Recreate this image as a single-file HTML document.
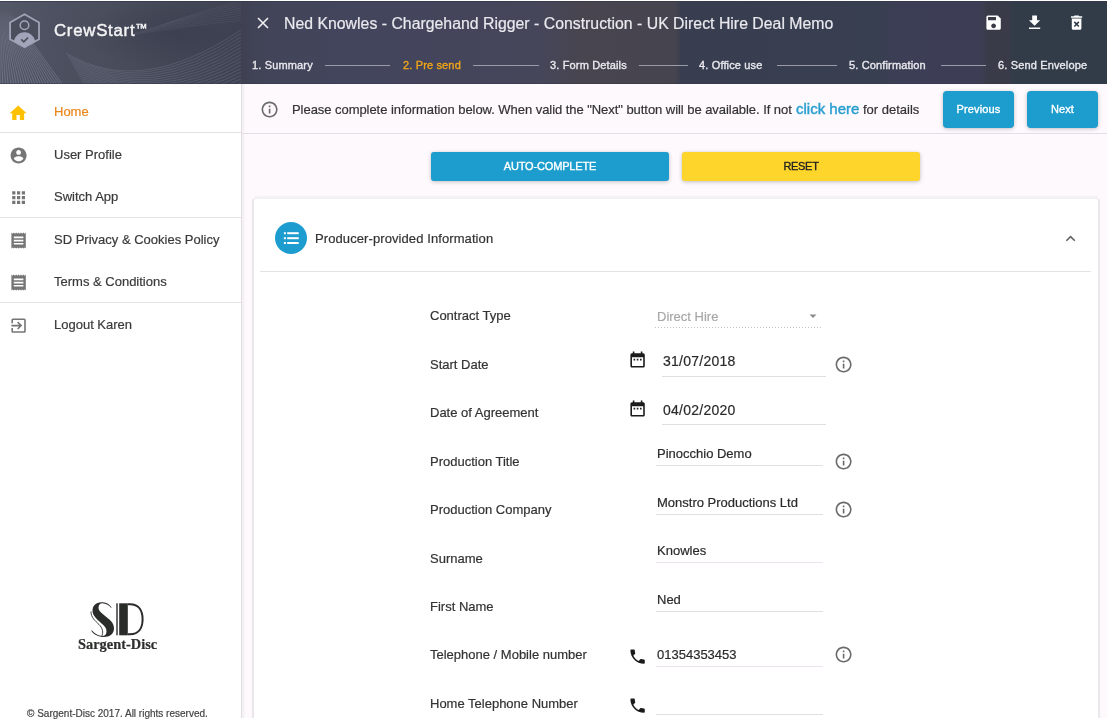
<!DOCTYPE html>
<html><head><meta charset="utf-8">
<style>
*{box-sizing:border-box;margin:0;padding:0}
html,body{width:1107px;height:727px;overflow:hidden;background:#fff;font-family:"Liberation Sans",sans-serif}
.a{position:absolute}
.t{position:absolute;white-space:nowrap;line-height:1;will-change:transform;-webkit-text-stroke:0.2px currentColor}
#main{left:241px;top:84px;width:866px;height:634px;background:#fdf9fd}
#hdr{left:241px;top:1px;width:866px;height:83px;background:linear-gradient(90deg,#3f4153 0px,#424459 31px,#43455d 120px,#44455b 227px,#46465a 300px,#48454f 340px,#46444f 434px,#383e4f 440px,#383f50 640px,#3c3e55 653px,#3d3e55 740px,#3a3b48 746px,#3a3b48 767px,#323c48 771px,#323c48 866px)}
#shdr{left:0;top:1px;width:241px;height:83px;background:linear-gradient(100deg,#555867 0%,#4d5060 25%,#4a4d5b 45%,#444756 70%,#3f4252 100%)}
#side{left:0;top:84px;width:241px;height:643px;background:#fff}
#sideb{left:241px;top:84px;width:5px;height:634px;background:linear-gradient(90deg,#e0dce2 0px,#e0dce2 1px,#f3f1f3 1px,#f4f2f4 3px,#fdf9fd 4px)}
.sl{left:0;width:241px;height:1px;background:#e4e1e5}
.st{left:54px;font-size:13px;color:#3a3a3a}
.si{left:8.5px;width:19.2px;height:19.2px}
.step{font-size:11px;color:#e9e9ee;top:60px;letter-spacing:0.15px;-webkit-text-stroke:0.35px currentColor}
.sline{top:65px;height:1px;background:#9a9ba6}
.lab{left:430px;font-size:13px;color:#333}
.val{font-size:13px;color:#2b2b2b}
.ul{height:1px;background:#e0dfe3}
.ic{width:19.2px;height:19.2px}
.btn{background:#1c9dcd;border-radius:3px;box-shadow:0 1px 4px rgba(0,0,0,.22),0 0 1px rgba(0,0,0,.12)}
</style></head><body>

<div class="a" id="shdr"></div>
<svg class="a" style="left:0;top:1px" width="241" height="83" viewBox="0 1 241 83">
<defs>
<linearGradient id="lgv" x1="0" y1="0" x2="0" y2="1"><stop offset="0.1" stop-color="#fff" stop-opacity="0"/><stop offset="0.5" stop-color="#fff" stop-opacity="0.7"/><stop offset="1" stop-color="#fff" stop-opacity="1"/></linearGradient>
<mask id="mk1"><rect x="0" y="0" width="241" height="84" fill="url(#lgv)"/></mask>
<radialGradient id="dk" cx="0.72" cy="0.4" r="0.4"><stop offset="0" stop-color="#34374a" stop-opacity="0.45"/><stop offset="1" stop-color="#34374a" stop-opacity="0"/></radialGradient>
</defs>
<rect x="0" y="0" width="241" height="84" fill="url(#dk)"/>
<path mask="url(#mk1)" stroke="#8d92a8" stroke-width="0.9" stroke-opacity="0.55" fill="none" d="M0.0 10 L0.0 84 M0.4 10 L2.7 84 M0.8 10 L5.4 84 M1.2 10 L8.1 84 M1.6 10 L10.8 84 M2.0 10 L13.5 84 M2.4 10 L16.2 84 M2.8 10 L18.9 84 M3.2 10 L21.6 84 M3.6 10 L24.3 84 M4.0 10 L27.0 84 M4.4 10 L29.7 84 M4.8 10 L32.4 84 M5.2 10 L35.1 84 M5.6 10 L37.8 84 M6.0 10 L40.5 84 M6.4 10 L43.2 84 M6.8 10 L45.9 84 M7.2 10 L48.6 84 M7.6 10 L51.3 84 M8.0 10 L54.0 84 M8.4 10 L56.7 84 M8.8 10 L59.4 84 M9.2 10 L62.1 84"/>
<path stroke="#767b92" stroke-width="0.8" stroke-opacity="0.45" fill="none" d="M66.0 53.0 Q140.0 98.0 241 30.0 M67.3 55.3 Q143.0 98.8 241 33.5 M68.6 57.6 Q146.0 99.6 241 37.0 M69.9 59.9 Q149.0 100.4 241 40.5 M71.2 62.2 Q152.0 101.2 241 44.0 M72.5 64.5 Q155.0 102.0 241 47.5 M73.8 66.8 Q158.0 102.8 241 51.0 M75.1 69.1 Q161.0 103.6 241 54.5 M76.4 71.4 Q164.0 104.4 241 58.0 M77.7 73.7 Q167.0 105.2 241 61.5 M79.0 76.0 Q170.0 106.0 241 65.0 M80.3 78.3 Q173.0 106.8 241 68.5 M81.6 80.6 Q176.0 107.6 241 72.0 M82.9 82.9 Q179.0 108.4 241 75.5 M84.2 85.2 Q182.0 109.2 241 79.0 M85.5 87.5 Q185.0 110.0 241 82.5 M86.8 89.8 Q188.0 110.8 241 86.0 M88.1 92.1 Q191.0 111.6 241 89.5 M89.4 94.4 Q194.0 112.4 241 93.0 M90.7 96.7 Q197.0 113.2 241 96.5 M92.0 99.0 Q200.0 114.0 241 100.0 M93.3 101.3 Q203.0 114.8 241 103.5"/>
<path stroke="#6d7188" stroke-width="0.7" stroke-opacity="0.3" fill="none" d="M170 22.0 Q205 10.0 241 1.0 M165 23.6 Q203 12.0 241 3.4 M160 25.2 Q201 14.0 241 5.8 M155 26.8 Q199 16.0 241 8.2 M150 28.4 Q197 18.0 241 10.6 M145 30.0 Q195 20.0 241 13.0 M140 31.6 Q193 22.0 241 15.4 M135 33.2 Q191 24.0 241 17.8 M130 34.8 Q189 26.0 241 20.2"/>
</svg>
<div class="a" id="hdr"></div>
<div class="a" id="main"></div>
<div class="a" id="side"></div>
<div class="a" id="sideb"></div>

<div class="a" style="left:0;top:0;width:1107px;height:1px;background:#fff"></div>
<div class="a" style="left:0;top:1px;width:1107px;height:1px;background:#33374a;opacity:.7"></div>
<div class="a" style="left:0;top:83px;width:1107px;height:1px;background:#33374a;opacity:.5"></div>
<!-- sidebar header -->
<svg class="a" style="left:0;top:0" width="50" height="60" viewBox="0 0 50 60">
  <defs><clipPath id="hx"><path d="M24.5 14.2 L39 22.4 V39.2 L24.5 47.3 L10.1 39.2 V22.4 Z"/></clipPath></defs>
  <path d="M24.5 14.2 L39 22.4 V39.2 L24.5 47.3 L10.1 39.2 V22.4 Z" fill="#4b4e5c"/>
  <g clip-path="url(#hx)"><ellipse cx="24.5" cy="44" rx="11" ry="11.8" fill="#a2a5ba"/></g>
  <path d="M24.5 14.2 L39 22.4 V39.2 L24.5 47.3 L10.1 39.2 V22.4 Z" fill="none" stroke="#a0a3b6" stroke-width="1.8"/>
  <circle cx="24.5" cy="25.2" r="4.3" fill="none" stroke="#a3a6bc" stroke-width="1.5"/>
  <path d="M21.2 39.3 L23.8 41.8 L28 37.6" fill="none" stroke="#4b4e5c" stroke-width="1.6"/>
</svg>
<div class="t" style="left:54px;top:23px;font-size:16.8px;color:#f4f4f6;letter-spacing:0.75px;-webkit-text-stroke:0.45px #f4f4f6">CrewStart<span style="font-size:12px;position:relative;top:-4px;letter-spacing:0">™</span></div>

<!-- sidebar items -->
<svg class="a" style="left:8.3px;top:103px;width:20.4px;height:20.4px" viewBox="0 0 24 24"><path fill="#ffc000" d="M10 20v-6h4v6h5v-8h3L12 3 2 12h3v8z"/></svg>
<div class="t st" style="top:105px;color:#e9851b">Home</div>
<div class="a sl" style="top:132px"></div>
<svg class="a si" style="top:146.2px" viewBox="0 0 24 24"><path fill="#757575" d="M12 2C6.48 2 2 6.48 2 12s4.48 10 10 10 10-4.48 10-10S17.52 2 12 2zm0 3c1.66 0 3 1.34 3 3s-1.34 3-3 3-3-1.34-3-3 1.34-3 3-3zm0 14.2c-2.5 0-4.71-1.28-6-3.22.03-1.99 4-3.08 6-3.08 1.99 0 5.97 1.09 6 3.08-1.29 1.94-3.5 3.22-6 3.22z"/></svg>
<div class="t st" style="top:148px">User Profile</div>
<svg class="a si" style="top:187.8px" viewBox="0 0 24 24"><path fill="#757575" d="M4 8h4V4H4v4zm6 12h4v-4h-4v4zm-6 0h4v-4H4v4zm0-6h4v-4H4v4zm6 0h4v-4h-4v4zm6-10v4h4V4h-4zm-6 4h4V4h-4v4zm6 6h4v-4h-4v4zm0 6h4v-4h-4v4z"/></svg>
<div class="t st" style="top:190px">Switch App</div>
<div class="a sl" style="top:217px"></div>
<svg class="a si" style="top:231.3px" viewBox="0 0 24 24"><path fill="#757575" d="M18 17H6v-2h12v2zm0-4H6v-2h12v2zm0-4H6V7h12v2zM3 22l1.5-1.5L6 22l1.5-1.5L9 22l1.5-1.5L12 22l1.5-1.5L15 22l1.5-1.5L18 22l1.5-1.5L21 22V2l-1.5 1.5L18 2l-1.5 1.5L15 2l-1.5 1.5L12 2l-1.5 1.5L9 2 7.5 3.5 6 2 4.5 3.5 3 2v20z"/></svg>
<div class="t st" style="top:233px">SD Privacy &amp; Cookies Policy</div>
<svg class="a si" style="top:273.2px" viewBox="0 0 24 24"><path fill="#757575" d="M18 17H6v-2h12v2zm0-4H6v-2h12v2zm0-4H6V7h12v2zM3 22l1.5-1.5L6 22l1.5-1.5L9 22l1.5-1.5L12 22l1.5-1.5L15 22l1.5-1.5L18 22l1.5-1.5L21 22V2l-1.5 1.5L18 2l-1.5 1.5L15 2l-1.5 1.5L12 2l-1.5 1.5L9 2 7.5 3.5 6 2 4.5 3.5 3 2v20z"/></svg>
<div class="t st" style="top:274.5px">Terms &amp; Conditions</div>
<div class="a sl" style="top:302px"></div>
<svg class="a si" style="top:315.5px" viewBox="0 0 24 24"><path fill="#757575" d="M10.09 15.59L11.5 17l5-5-5-5-1.41 1.41L12.67 11H3v2h9.67l-2.58 2.59zM19 3H5c-1.11 0-2 .9-2 2v4h2V5h14v14H5v-4H3v4c0 1.1.89 2 2 2h14c1.1 0 2-.9 2-2V5c0-1.1-.9-2-2-2z"/></svg>
<div class="t st" style="top:317.5px">Logout Karen</div>


<svg class="a" style="left:70px;top:595px" width="100" height="65" viewBox="0 0 100 65">
  <path fill="#2a2c2a" d="M41.5 12.5 C39 8.5 35 7.3 31.5 7.3 C25.5 7.3 22.5 11 22.5 15.5 C22.5 21 27 24 31 28 C35 31 36.5 33.5 36.5 36.5 C36.5 39.5 34.5 41 32.5 41 C28 41 24.5 38.5 21.8 35.3 L21.3 35.8 C24 39.8 28.5 42 33.5 42 C40 42 44 38.5 44 33.5 C44 27.5 39.5 24.5 34.5 20.5 C30.5 17.5 28.5 15.5 28.5 12.8 C28.5 10 30 8.3 32.3 8.3 C36 8.3 39.5 10.5 41.2 13 Z"/>
  <path fill="none" stroke="#2a2c2a" stroke-width="0.9" d="M21 16.5 C20.8 22.5 25.5 26 29 29.5 C32.5 33 33.8 37.5 31.5 41.8"/>
  <rect x="46.3" y="8.3" width="1.4" height="32" fill="#2a2c2a"/>
  <rect x="49.2" y="8.3" width="8.6" height="32" fill="#2a2c2a"/>
  <path d="M57.8 9.3 H60 C69.5 9.3 72.6 16.5 72.6 24.3 C72.6 32 69.5 39.3 60 39.3 H57.8" fill="none" stroke="#2a2c2a" stroke-width="2"/>
</svg>
<div class="t" style="left:77.7px;top:637px;font-family:'Liberation Serif',serif;font-weight:bold;font-size:14.4px;color:#2d2f2d">Sargent-Disc</div>
<div class="t" style="left:27px;top:708.6px;font-size:10px;color:#444">© Sargent-Disc 2017. All rights reserved.</div>

<!-- header -->
<svg class="a" style="left:257px;top:17px" width="12" height="12" viewBox="0 0 12 12"><path d="M1 1L11 11M11 1L1 11" stroke="#f0f0f2" stroke-width="1.6"/></svg>
<div class="t" style="left:283.5px;top:15.6px;font-size:15.8px;color:#e9e9ee;letter-spacing:0.02px">Ned Knowles - Chargehand Rigger - Construction - UK Direct Hire Deal Memo</div>


<svg class="a" style="left:983.7px;top:13px" width="19.2" height="19.2" viewBox="0 0 24 24"><path fill="#fff" d="M17 3H5c-1.11 0-2 .9-2 2v14c0 1.1.89 2 2 2h14c1.1 0 2-.9 2-2V7l-4-4zm-5 16c-1.66 0-3-1.34-3-3s1.34-3 3-3 3 1.34 3 3-1.34 3-3 3zm3-10H5V5h10v4z"/></svg>
<svg class="a" style="left:1025.2px;top:13px" width="19.2" height="19.2" viewBox="0 0 24 24"><path fill="#fff" d="M19 9h-4V3H9v6H5l7 7 7-7zM5 18v2h14v-2H5z"/></svg>
<svg class="a" style="left:1067px;top:13px" width="19.2" height="19.2" viewBox="0 0 24 24"><path fill="#fff" d="M6 19c0 1.1.9 2 2 2h8c1.1 0 2-.9 2-2V7H6v12zm2.46-7.12l1.41-1.41L12 12.59l2.12-2.12 1.41 1.41L13.41 14l2.12 2.12-1.41 1.41L12 15.410l-2.12 2.12-1.41-1.41L10.59 14l-2.13-2.12zM15.5 4l-1-1h-5l-1 1H5v2h14V4z"/></svg>
<div class="t step" style="left:251.5px">1. Summary</div>
<div class="a sline" style="left:325px;width:65px"></div>
<div class="t step" style="left:402.6px;color:#f2a619">2. Pre send</div>
<div class="a sline" style="left:473px;width:66px"></div>
<div class="t step" style="left:550px">3. Form Details</div>
<div class="a sline" style="left:639px;width:49px"></div>
<div class="t step" style="left:699.4px">4. Office use</div>
<div class="a sline" style="left:776.6px;width:60px"></div>
<div class="t step" style="left:849px">5. Confirmation</div>
<div class="a sline" style="left:940.5px;width:45.5px"></div>
<div class="t step" style="left:998px">6. Send Envelope</div>

<!-- info bar -->
<svg class="a" style="left:260.4px;top:99.5px" width="19.2" height="19.2" viewBox="0 0 24 24"><path fill="#6a6a6a" d="M11 7h2v2h-2zm0 4h2v6h-2zm1-9C6.48 2 2 6.48 2 12s4.48 10 10 10 10-4.48 10-10S17.52 2 12 2zm0 18c-4.41 0-8-3.59-8-8s3.59-8 8-8 8 3.59 8 8-3.59 8-8 8z"/></svg>
<div class="t" style="left:292px;top:103px;font-size:13px;color:#333;letter-spacing:-0.05px">Please complete information below. When valid the "Next" button will be available. If not</div>
<div class="t" style="left:795.8px;top:100.5px;font-size:15px;color:#2a9fd0;-webkit-text-stroke:0.45px #2a9fd0">click here</div>
<div class="t" style="left:863px;top:103px;font-size:13px;color:#333">for details</div>
<div class="a btn" style="left:943px;top:90.6px;width:71px;height:37px;border-radius:4px"></div>
<div class="t" style="left:943px;top:104px;width:71px;text-align:center;font-size:11px;color:#fff;letter-spacing:0.15px;-webkit-text-stroke:0.35px #fff">Previous</div>
<div class="a btn" style="left:1027px;top:90.6px;width:71px;height:37px;border-radius:4px"></div>
<div class="t" style="left:1027px;top:104px;width:71px;text-align:center;font-size:11px;color:#fff;letter-spacing:0.1px;-webkit-text-stroke:0.35px #fff">Next</div>
<div class="a" style="left:241px;top:133px;width:866px;height:1px;background:#e2e0e4"></div>

<!-- action buttons -->
<div class="a btn" style="left:431px;top:152px;width:238px;height:29px"></div>
<div class="t" style="left:431px;top:161px;width:238px;text-align:center;font-size:11px;color:#fff;letter-spacing:-0.15px;-webkit-text-stroke:0.35px #fff">AUTO-COMPLETE</div>
<div class="a btn" style="left:682px;top:152px;width:238px;height:29px;background:#fed52a"></div>
<div class="t" style="left:682px;top:161px;width:238px;text-align:center;font-size:11px;color:#222;letter-spacing:-0.3px;-webkit-text-stroke:0.35px #222">RESET</div>

<!-- card -->
<div class="a" style="left:254px;top:199px;width:844px;height:540px;background:#fff;border-radius:2px;box-shadow:-2px 0 1px #e9e5ea,2px 0 1px #ebe8eb,0 -3px 1px #f3f1f3"></div>
<div class="a" style="left:275px;top:221.8px;width:32.3px;height:32.3px;border-radius:50%;background:#1d9dcf"></div>
<svg class="a" style="left:275px;top:220px" width="33" height="33" viewBox="0 0 33 33">
<g fill="#fff"><rect x="8.9" y="12.2" width="2" height="2"/><rect x="12.2" y="12.2" width="11.5" height="2"/>
<rect x="8.9" y="17.2" width="2" height="2"/><rect x="12.2" y="17.2" width="11.5" height="2"/>
<rect x="8.9" y="22" width="2" height="2"/><rect x="12.2" y="22" width="11.5" height="2"/></g></svg>
<div class="t" style="left:314.6px;top:232px;font-size:13px;color:#333;letter-spacing:0.09px">Producer-provided Information</div>
<div class="a" style="left:260px;top:271px;width:831px;height:1px;background:#e3e3e3"></div>
<svg class="a" style="left:1060.8px;top:228.5px" width="19.2" height="19.2" viewBox="0 0 24 24"><path fill="#616161" d="M12 8l-6 6 1.41 1.41L12 10.83l4.59 4.58L18 14z"/></svg>

<!-- form -->
<div class="t lab" style="top:309px">Contract Type</div>
<div class="t lab" style="top:358px">Start Date</div>
<div class="t lab" style="top:406px">Date of Agreement</div>
<div class="t lab" style="top:455px">Production Title</div>
<div class="t lab" style="top:503px">Production Company</div>
<div class="t lab" style="top:552px">Surname</div>
<div class="t lab" style="top:600px">First Name</div>
<div class="t lab" style="top:648px">Telephone / Mobile number</div>
<div class="t lab" style="top:697px">Home Telephone Number</div>

<div class="t val" style="left:656.7px;top:310px;color:#a8a8a8">Direct Hire</div>
<svg class="a" style="left:808px;top:313px" width="10" height="6" viewBox="0 0 10 6"><path d="M1.5 1.5h7L5 5z" fill="#8a8a8a"/></svg>
<div class="a" style="left:655px;top:326.5px;width:167px;height:1px;background:repeating-linear-gradient(90deg,#c2c2c2 0,#c2c2c2 1px,transparent 1px,transparent 3px)"></div>

<svg class="a ic" style="left:628px;top:350.1px" viewBox="0 0 24 24"><path fill="#1b1b1b" d="M9 11H7v2h2v-2zm4 0h-2v2h2v-2zm4 0h-2v2h2v-2zm2-7h-1V2h-2v2H8V2H6v2H5c-1.11 0-1.99.9-1.99 2L3 20c0 1.1.89 2 2 2h14c1.1 0 2-.9 2-2V6c0-1.1-.9-2-2-2zm0 16H5V9h14v11z"/></svg>
<div class="t val" style="left:662.8px;top:354px;font-size:14px;letter-spacing:0.25px">31/07/2018</div>
<div class="a ul" style="left:662px;top:376px;width:164px"></div>
<svg class="a ic" style="left:834.1px;top:354.8px" viewBox="0 0 24 24"><path fill="#6a6a6a" d="M11 7h2v2h-2zm0 4h2v6h-2zm1-9C6.48 2 2 6.48 2 12s4.48 10 10 10 10-4.48 10-10S17.52 2 12 2zm0 18c-4.41 0-8-3.59-8-8s3.59-8 8-8 8 3.59 8 8-3.59 8-8 8z"/></svg>

<svg class="a ic" style="left:628px;top:398.6px" viewBox="0 0 24 24"><path fill="#1b1b1b" d="M9 11H7v2h2v-2zm4 0h-2v2h2v-2zm4 0h-2v2h2v-2zm2-7h-1V2h-2v2H8V2H6v2H5c-1.11 0-1.99.9-1.99 2L3 20c0 1.1.89 2 2 2h14c1.1 0 2-.9 2-2V6c0-1.1-.9-2-2-2zm0 16H5V9h14v11z"/></svg>
<div class="t val" style="left:662.8px;top:403px;font-size:14px;letter-spacing:0.25px">04/02/2020</div>
<div class="a ul" style="left:662px;top:424px;width:164px"></div>

<div class="t val" style="left:657px;top:447px">Pinocchio Demo</div>
<div class="a ul" style="left:656px;top:465px;width:167px"></div>
<svg class="a ic" style="left:834.1px;top:452px" viewBox="0 0 24 24"><path fill="#6a6a6a" d="M11 7h2v2h-2zm0 4h2v6h-2zm1-9C6.48 2 2 6.48 2 12s4.48 10 10 10 10-4.48 10-10S17.52 2 12 2zm0 18c-4.41 0-8-3.59-8-8s3.59-8 8-8 8 3.59 8 8-3.59 8-8 8z"/></svg>

<div class="t val" style="left:657px;top:495.5px">Monstro Productions Ltd</div>
<div class="a ul" style="left:656px;top:514px;width:167px"></div>
<svg class="a ic" style="left:834.1px;top:499.8px" viewBox="0 0 24 24"><path fill="#6a6a6a" d="M11 7h2v2h-2zm0 4h2v6h-2zm1-9C6.48 2 2 6.48 2 12s4.48 10 10 10 10-4.48 10-10S17.52 2 12 2zm0 18c-4.41 0-8-3.59-8-8s3.59-8 8-8 8 3.59 8 8-3.59 8-8 8z"/></svg>

<div class="t val" style="left:657px;top:544px">Knowles</div>
<div class="a ul" style="left:656px;top:562px;width:167px;background:#ece3ee"></div>

<div class="t val" style="left:657px;top:593px">Ned</div>
<div class="a ul" style="left:656px;top:611px;width:167px"></div>

<svg class="a ic" style="left:627.6px;top:647.3px" viewBox="0 0 24 24"><path fill="#1b1b1b" d="M6.62 10.79c1.44 2.83 3.76 5.14 6.59 6.59l2.2-2.2c.27-.27.67-.36 1.02-.24 1.12.37 2.33.57 3.57.57.55 0 1 .45 1 1V20c0 .55-.45 1-1 1-9.39 0-17-7.61-17-17 0-.55.45-1 1-1h3.5c.55 0 1 .45 1 1 0 1.250.2 2.45.57 3.57.11.35.03.74-.25 1.02l-2.2 2.2z"/></svg>
<div class="t val" style="left:657px;top:648px">01354353453</div>
<div class="a ul" style="left:656px;top:666px;width:167px;background:#ece3ee"></div>
<svg class="a ic" style="left:834.1px;top:645.4px" viewBox="0 0 24 24"><path fill="#6a6a6a" d="M11 7h2v2h-2zm0 4h2v6h-2zm1-9C6.48 2 2 6.48 2 12s4.48 10 10 10 10-4.48 10-10S17.52 2 12 2zm0 18c-4.41 0-8-3.59-8-8s3.59-8 8-8 8 3.59 8 8-3.59 8-8 8z"/></svg>

<svg class="a ic" style="left:627.6px;top:695.8px" viewBox="0 0 24 24"><path fill="#1b1b1b" d="M6.62 10.79c1.44 2.83 3.76 5.14 6.59 6.59l2.2-2.2c.27-.27.67-.36 1.02-.24 1.12.37 2.33.57 3.57.57.55 0 1 .45 1 1V20c0 .55-.45 1-1 1-9.390 0-17-7.61-17-17 0-.55.45-1 1-1h3.5c.55 0 1 .45 1 1 0 1.25.2 2.45.57 3.57.11.35.03.74-.25 1.02l-2.2 2.2z"/></svg>
<div class="a ul" style="left:655.5px;top:714px;width:167px"></div>

<!-- bottom white strip -->
<div class="a" style="left:240px;top:718px;width:867px;height:9px;background:#fff"></div>
</body></html>
